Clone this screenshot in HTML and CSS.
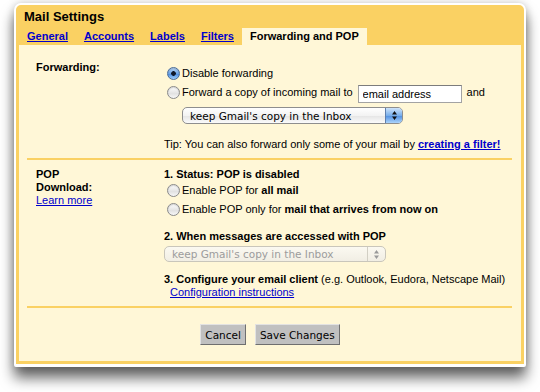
FILE: index.html
```html
<!DOCTYPE html>
<html lang="en">
<head>
  <meta charset="UTF-8" />
  <title>Mail Settings</title>
  <link rel="stylesheet" href="styles.css">
</head>
<body>

  <div class="window">
    <h1 class="title">Mail Settings</h1>
    <ul class="tabs">
      <li><a href="#">General</a></li>
      <li><a href="#">Accounts</a></li>
      <li><a href="#">Labels</a></li>
      <li><a href="#">Filters</a></li>
      <li class="active">Forwarding and POP</li>
    </ul>

    <div class="panel">
      <div class="section fwd">
        <div class="label">Forwarding:</div>
        <div class="body">
          <div class="opt"><span class="radio on"></span>Disable forwarding</div>
          <div class="opt"><span class="radio"></span>Forward a copy of incoming mail to
            <input class="addr" type="text" value="email address"> and</div>
          <div class="select fwd-select">
            <span class="sel-text">keep Gmail's copy in the Inbox</span>
            <span class="arrows">
              <svg width="7" height="11" viewBox="0 0 7 11"><path d="M3.5 1 L6 4.5 H1 Z M3.5 10 L6 6.5 H1 Z" fill="#111"/></svg>
            </span>
          </div>
          <p class="tip">Tip: You can also forward only some of your mail by <a href="#" class="strong-link">creating a filter!</a></p>
        </div>
      </div>

      <div class="rule"></div>

      <div class="section pop">
        <div class="label">POP<br>Download:<br><a href="#" class="plain-link">Learn more</a></div>
        <div class="body">
          <div class="step">1. Status: POP is disabled</div>
          <div class="opt"><span class="radio"></span>Enable POP for&nbsp;<b>all mail</b></div>
          <div class="opt"><span class="radio"></span>Enable POP only for&nbsp;<b>mail that arrives from now on</b></div>
          <div class="step step-gap">2. When messages are accessed with POP</div>
          <div class="select disabled">
            <span class="sel-text">keep Gmail's copy in the Inbox</span>
            <span class="arrows">
              <svg width="7" height="11" viewBox="0 0 7 11"><path d="M3.5 1 L6 4.5 H1 Z M3.5 10 L6 6.5 H1 Z" fill="#9a9a9a"/></svg>
            </span>
          </div>
          <div class="step-gap"><b>3. Configure your email client</b> (e.g. Outlook, Eudora, Netscape Mail)</div>
          <a href="#" class="plain-link config">Configuration instructions</a>
        </div>
      </div>

      <div class="rule"></div>

      <div class="actions">
        <button class="btn">Cancel</button>
        <button class="btn">Save Changes</button>
      </div>
    </div>
  </div>

</body>
</html>
```

FILE: styles.css
```css
html, body {
  height: 392px;
}

body {
  margin: 0;
  background: #fff;
  font-family: "Liberation Sans", Arial, sans-serif;
  font-size: 11px;
  line-height: 13px;
  color: #000;
  overflow: hidden;
}

.window {
  box-sizing: border-box;
  width: 512px;
  margin: 3px 0 0 14px;
  border: 2px solid #fff;
  border-bottom-width: 3px;
  border-radius: 7px 7px 2px 2px;
  background: #fad163;
  box-shadow: 0 11px 14px rgba(0,0,0,0.6), 0 0 9px rgba(0,0,0,0.2);
}

.title {
  margin: 0;
  padding: 4px 0 0 8px;
  font-size: 13px;
  line-height: 16px;
  font-weight: bold;
}

.tabs {
  display: flex;
  list-style: none;
  margin: 3px 0 0;
  padding: 0 0 0 3px;
}

.tabs li {
  padding: 2px 8px;
  font-weight: bold;
}

.tabs a { color: #0000cc; }

.tabs .active { background: #fff7d7; }

.panel {
  margin: 0 3px 3px;
  background: #fff7d7;
  padding-bottom: 16px;
}

.section {
  display: flex;
  padding: 16px 0 7px 17px;
}

.section.pop { padding-top: 8px; }

.label {
  width: 128px;
  flex-shrink: 0;
  font-weight: bold;
}

.fwd .body { margin-top: 3px; }

.rule {
  height: 2px;
  background: #fad163;
  margin: 0 9px 0 8px;
}

.opt {
  display: flex;
  align-items: center;
  height: 19px;
  white-space: nowrap;
}

.radio {
  box-sizing: border-box;
  width: 13px;
  height: 13px;
  margin: 0 2px 0 3px;
  border-radius: 50%;
  border: 1px solid #8a8a8a;
  background: linear-gradient(#fdfdfd, #e2e2e2 60%, #f7f7f7);
  box-shadow: inset 0 1px 1px rgba(0,0,0,0.15);
}

.radio.on {
  border-color: #4b6c98;
  background: radial-gradient(circle, #10182a 0 2px, transparent 2.6px),
              linear-gradient(#bcd8f6, #6aa2e6 50%, #4d8de0 55%, #9fcdfa);
}

.addr {
  box-sizing: border-box;
  width: 104px;
  height: 18px;
  margin: 2px 5px 0;
  padding: 0 4px;
  border: 1px solid #a3a3a3;
  border-top-color: #7c7c7c;
  background: #fff;
  font: 11px "Liberation Sans", Arial, sans-serif;
  color: #000;
}

.select {
  box-sizing: border-box;
  display: flex;
  align-items: center;
  justify-content: space-between;
  width: 221px;
  height: 17px;
  border: 1px solid #8e8e8e;
  border-radius: 5px;
  background: linear-gradient(#ffffff, #f3f3f3 50%, #e6e6e6 55%, #fbfbfb);
  font: 10.5px "DejaVu Sans", sans-serif;
  overflow: hidden;
}

.fwd-select { margin: 5px 0 0 18px; }

.sel-text { padding-left: 7px; white-space: nowrap; }

.arrows {
  display: flex;
  align-items: center;
  justify-content: center;
  width: 16px;
  height: 100%;
  border-left: 1px solid #5d7fae;
  background: linear-gradient(#cfe4fb, #78aeea 50%, #5593e2 55%, #acd4fb);
}

.select.disabled {
  width: 222px;
  height: 16px;
  margin-top: 3px;
  border-color: #c9c6bb;
  background: linear-gradient(#fbf9f1, #f1eee4);
  color: #9c9c9c;
}

.select.disabled .arrows {
  width: 17px;
  border-left-color: #d2cfc4;
  background: transparent;
}

.tip {
  margin: 14px 0 0;
}

.strong-link {
  color: #0000cc;
  font-weight: bold;
}

.plain-link {
  color: #0000cc;
  font-weight: normal;
}

.step { font-weight: bold; }

.step-gap { margin-top: 11px; }

.config { margin-left: 6px; }

.actions {
  display: flex;
  justify-content: center;
  gap: 9px;
  margin-top: 16px;
}

.btn {
  height: 21px;
  padding: 0 4px;
  background: #c0c0c0;
  border: 1px solid;
  border-color: #e2e2e2 #6f6f6f #6f6f6f #e2e2e2;
  border-radius: 0;
  font: 10.5px "DejaVu Sans", sans-serif;
  color: #000;
}
```
